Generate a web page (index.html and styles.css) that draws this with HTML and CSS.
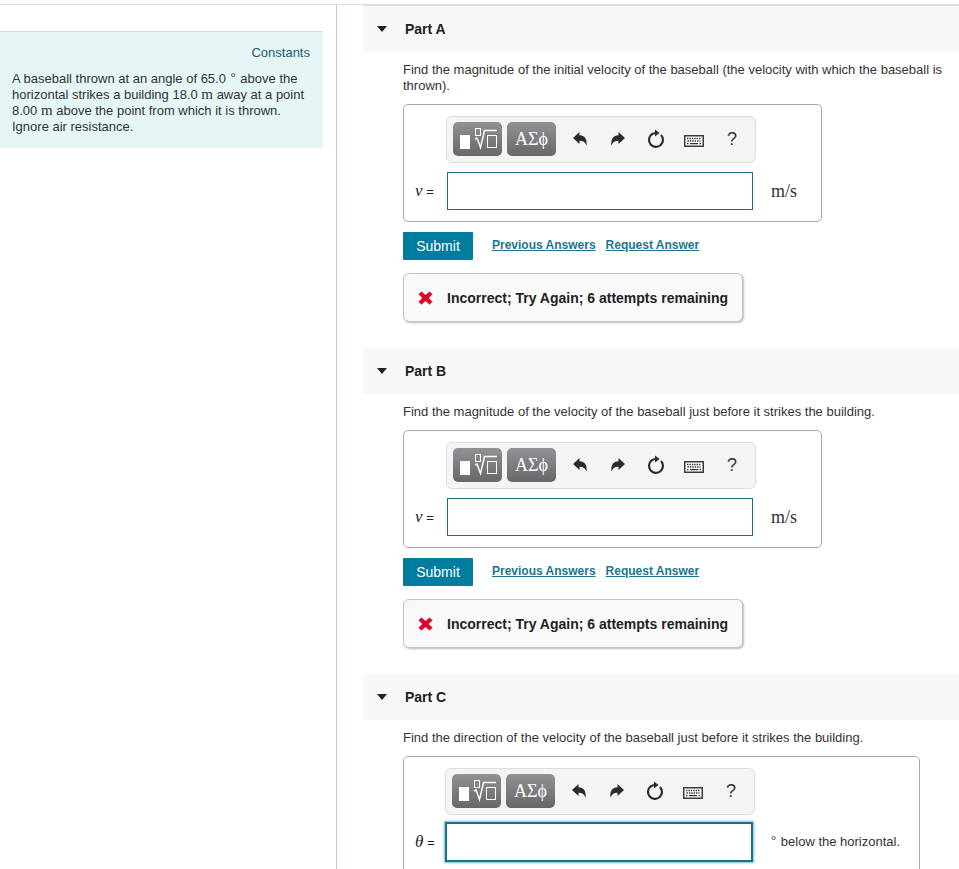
FILE: index.html
```html
<!DOCTYPE html>
<html lang="en">
<head>
<meta charset="utf-8">
<title>Projectile problem</title>
<link rel="stylesheet" href="styles.css">
</head>
<body>
<svg class="sprite" aria-hidden="true">
  <symbol id="i-root" viewBox="0 0 50 34">
    <rect x="7" y="13" width="10" height="14" fill="#fff"/>
    <g fill="none" stroke="#fff">
      <rect x="22.500" y="6.500" width="5" height="7"/>
      <path d="M22 17l2-1 3.500 9.500L31.500 8.500H44" stroke-width="1.400"/>
      <rect x="34.500" y="13.500" width="9" height="12"/>
    </g>
  </symbol>
  <symbol id="i-undo" viewBox="0 0 16 16">
    <path d="M1 7L7.500 1v3.200c5 .1 8 3.800 7 10.600C13.700 11.500 11.500 9.700 7.500 9.700V13z"/>
  </symbol>
  <symbol id="i-redo" viewBox="0 0 16 16">
    <path d="M15 7L8.500 1v3.200c-5 .1-8 3.800-7 10.600C2.300 11.500 4.500 9.700 8.500 9.700V13z"/>
  </symbol>
  <symbol id="i-reset" viewBox="0 0 18 20">
    <path d="M14 6a7 7 0 1 1-9.500-.500Q6.500 4 9 4" fill="none" stroke="#2b2b2b" stroke-width="2.200"/>
    <path d="M8 .5L12.600 4 8 7.500z"/>
  </symbol>
  <symbol id="i-keys" viewBox="0 0 20 12">
    <rect x=".75" y=".75" width="18.500" height="10.500" fill="#fff" stroke="#3a3a3a" stroke-width="1.500"/>
    <path d="M3 3.500h14M3.500 6h13" stroke="#333" stroke-width="1.500" stroke-dasharray="1.400 1"/>
    <path d="M3 8.700h1.500M6 8.700h8M15.500 8.700H17" stroke="#333" stroke-width="1.300"/>
  </symbol>
  <symbol id="i-cross" viewBox="0 0 14 14">
    <path d="M0 3.300L3 .4 7 4 11 .4l3 2.900L10.200 7l3.800 3.700-3 2.900L7 10l-4 3.600-3-2.900L3.800 7z" fill="#e0062b"/>
  </symbol>
</svg>
<div class="page">
  <aside class="side">
    <div class="problem">
      <a class="constants" href="#">Constants</a>
      <p>A baseball thrown at an angle of 65.0 <span class="deg">°</span> above the horizontal strikes a building 18.0 <span class="math">m</span> away at a point 8.00 <span class="math">m</span> above the point from which it is thrown. Ignore air resistance.</p>
    </div>
  </aside>
  <main class="parts">
    <section class="part">
      <h2><button class="toggle" aria-label="Collapse Part A"></button>Part A</h2>
      <div class="body">
        <p>Find the magnitude of the initial velocity of the baseball (the velocity with which the baseball is thrown).</p>
        <div class="answer">
          <div class="toolbar">
            <button class="key" aria-label="Templates"><svg><use href="#i-root"/></svg></button>
            <button class="key greek">ΑΣϕ</button>
            <div class="tools">
              <button aria-label="Undo"><svg class="arrow"><use href="#i-undo"/></svg></button>
              <button aria-label="Redo"><svg class="arrow"><use href="#i-redo"/></svg></button>
              <button aria-label="Reset"><svg class="reset"><use href="#i-reset"/></svg></button>
              <button aria-label="Keyboard"><svg class="keys"><use href="#i-keys"/></svg></button>
              <button class="help">?</button>
            </div>
          </div>
          <label for="a"><i>v</i> =</label>
          <input id="a" type="text">
          <span class="unit">m/s</span>
        </div>
        <div class="actions"><button class="submit">Submit</button><a href="#">Previous Answers</a><a href="#">Request Answer</a></div>
        <div class="feedback"><svg><use href="#i-cross"/></svg>Incorrect; Try Again; 6 attempts remaining</div>
      </div>
    </section>
    <section class="part">
      <h2><button class="toggle" aria-label="Collapse Part B"></button>Part B</h2>
      <div class="body">
        <p>Find the magnitude of the velocity of the baseball just before it strikes the building.</p>
        <div class="answer">
          <div class="toolbar">
            <button class="key" aria-label="Templates"><svg><use href="#i-root"/></svg></button>
            <button class="key greek">ΑΣϕ</button>
            <div class="tools">
              <button aria-label="Undo"><svg class="arrow"><use href="#i-undo"/></svg></button>
              <button aria-label="Redo"><svg class="arrow"><use href="#i-redo"/></svg></button>
              <button aria-label="Reset"><svg class="reset"><use href="#i-reset"/></svg></button>
              <button aria-label="Keyboard"><svg class="keys"><use href="#i-keys"/></svg></button>
              <button class="help">?</button>
            </div>
          </div>
          <label for="b"><i>v</i> =</label>
          <input id="b" type="text">
          <span class="unit">m/s</span>
        </div>
        <div class="actions"><button class="submit">Submit</button><a href="#">Previous Answers</a><a href="#">Request Answer</a></div>
        <div class="feedback"><svg><use href="#i-cross"/></svg>Incorrect; Try Again; 6 attempts remaining</div>
      </div>
    </section>
    <section class="part">
      <h2><button class="toggle" aria-label="Collapse Part C"></button>Part C</h2>
      <div class="body">
        <p>Find the direction of the velocity of the baseball just before it strikes the building.</p>
        <div class="answer angle">
          <div class="toolbar">
            <button class="key" aria-label="Templates"><svg><use href="#i-root"/></svg></button>
            <button class="key greek">ΑΣϕ</button>
            <div class="tools">
              <button aria-label="Undo"><svg class="arrow"><use href="#i-undo"/></svg></button>
              <button aria-label="Redo"><svg class="arrow"><use href="#i-redo"/></svg></button>
              <button aria-label="Reset"><svg class="reset"><use href="#i-reset"/></svg></button>
              <button aria-label="Keyboard"><svg class="keys"><use href="#i-keys"/></svg></button>
              <button class="help">?</button>
            </div>
          </div>
          <label for="c"><i>θ</i> =</label>
          <input id="c" class="active" type="text">
          <span class="after"><span class="deg">°</span> below the horizontal.</span>
        </div>
      </div>
    </section>
  </main>
</div>
</body>
</html>
```
FILE: styles.css
```css
* { box-sizing: border-box; }

body {
  margin: 0;
  padding-top: 4px;
  height: 100vh;
  overflow: hidden;
  background: #fff;
  color: #333;
  font: 13px/16px "Liberation Sans", Arial, sans-serif;
}

p, h2 { margin: 0; }
button { font-family: inherit; border: 0; padding: 0; background: none; cursor: pointer; }
svg { display: block; fill: #2b2b2b; }
.sprite { position: absolute; width: 0; height: 0; }

.page {
  display: flex;
  height: 100%;
  border-top: 1px solid #dcdcdc;
}

.side {
  flex: 0 0 337px;
  padding: 26px 13px 0 0;
  border-right: 1px solid #bccad5;
}

.problem {
  padding: 13px 13px 13px 12px;
  border-top: 1px solid #d3dfe0;
  background: #e6f6f7;
}

.constants {
  display: block;
  margin-bottom: 10px;
  text-align: right;
  color: #1b5c70;
  text-decoration: none;
}

.math { font: 15px/0 "Liberation Serif", serif; }
.deg {
  padding: 0 1px;
  font: 13px/0 "Liberation Serif", serif;
  vertical-align: 2px;
}

.parts {
  flex: 1;
  min-width: 0;
  margin-left: 26px;
  overflow-y: auto;
  scrollbar-width: none;
}

.part { margin-bottom: 26px; }
.part:first-child { border-top: 1px solid #dcdcdc; }

h2 {
  display: flex;
  align-items: center;
  gap: 18px;
  height: 46px;
  padding-left: 14px;
  background: #f8f8f8;
  color: #222;
  font-size: 14px;
}

.toggle {
  border: 5px solid transparent;
  border-top: 6px solid #222;
  border-bottom: 0;
}

.body { padding: 10px 12px 0 40px; }

.answer {
  display: inline-grid;
  grid-template-columns: 31px 310px auto;
  row-gap: 9px;
  align-items: center;
  margin-top: 10px;
  padding: 11px 24px 11px 11px;
  border: 1px solid #aaa;
  border-radius: 5px;
  vertical-align: top;
}

.answer.angle {
  grid-template-columns: 30px 310px auto;
  row-gap: 7px;
  padding-right: 19px;
}

.toolbar {
  grid-column: 2;
  display: flex;
  gap: 5px;
  height: 47px;
  padding: 5px 0 5px 6px;
  border: 1px solid #ddd;
  border-radius: 6px;
  background: #f4f4f4;
}

.key {
  flex: none;
  width: 49px;
  height: 34px;
  border-radius: 5px;
  background: linear-gradient(#929296, #67676a);
  color: #fff;
}

.key svg { width: 50px; height: 34px; }
.greek { font: 18px/32px "Liberation Serif", serif; }

.tools { display: flex; }
.tools button {
  display: flex;
  align-items: center;
  justify-content: center;
  width: 38px;
  height: 34px;
  color: #333;
}

.arrow { width: 16px; height: 16px; }
.reset { width: 18px; height: 20px; }
.keys { width: 20px; height: 12px; margin-top: 4px; }
.tools .help { font-size: 18px; }

label { grid-column: 1; color: #222; }
label i { font: italic 17px/1 "Liberation Serif", serif; }

input {
  width: 306px;
  height: 38px;
  margin: 0 0 0 1px;
  padding: 0 8px;
  border: 1px solid #1b7082;
  background: #fff;
  font: inherit;
}

input:focus { outline: none; }
input.active {
  width: 308px;
  height: 40px;
  margin: 0;
  border-width: 2px;
  box-shadow: 0 0 2px 1px #6cc5de;
}

.unit { padding-left: 15px; font: 18px/1 "Liberation Serif", serif; }
.after { padding-left: 15px; }

.actions { display: flex; margin-top: 10px; }
.actions a {
  margin: 5px 10px 0 0;
  color: #1b7690;
  font-size: 12px;
  font-weight: bold;
}

.submit {
  width: 70px;
  height: 28px;
  margin-right: 19px;
  border-radius: 1px;
  background: #007c9f;
  color: #fff;
  font-size: 14px;
}

.feedback {
  display: flex;
  align-items: center;
  gap: 14px;
  width: fit-content;
  height: 49px;
  margin-top: 13px;
  padding: 0 14px;
  border: 1px solid #c4c4c4;
  border-radius: 6px;
  background: #f9f9f9;
  box-shadow: 1px 1px 2px #bbb;
  color: #222;
  font-size: 14px;
  font-weight: bold;
}

.feedback svg { width: 15px; height: 14px; }
```
